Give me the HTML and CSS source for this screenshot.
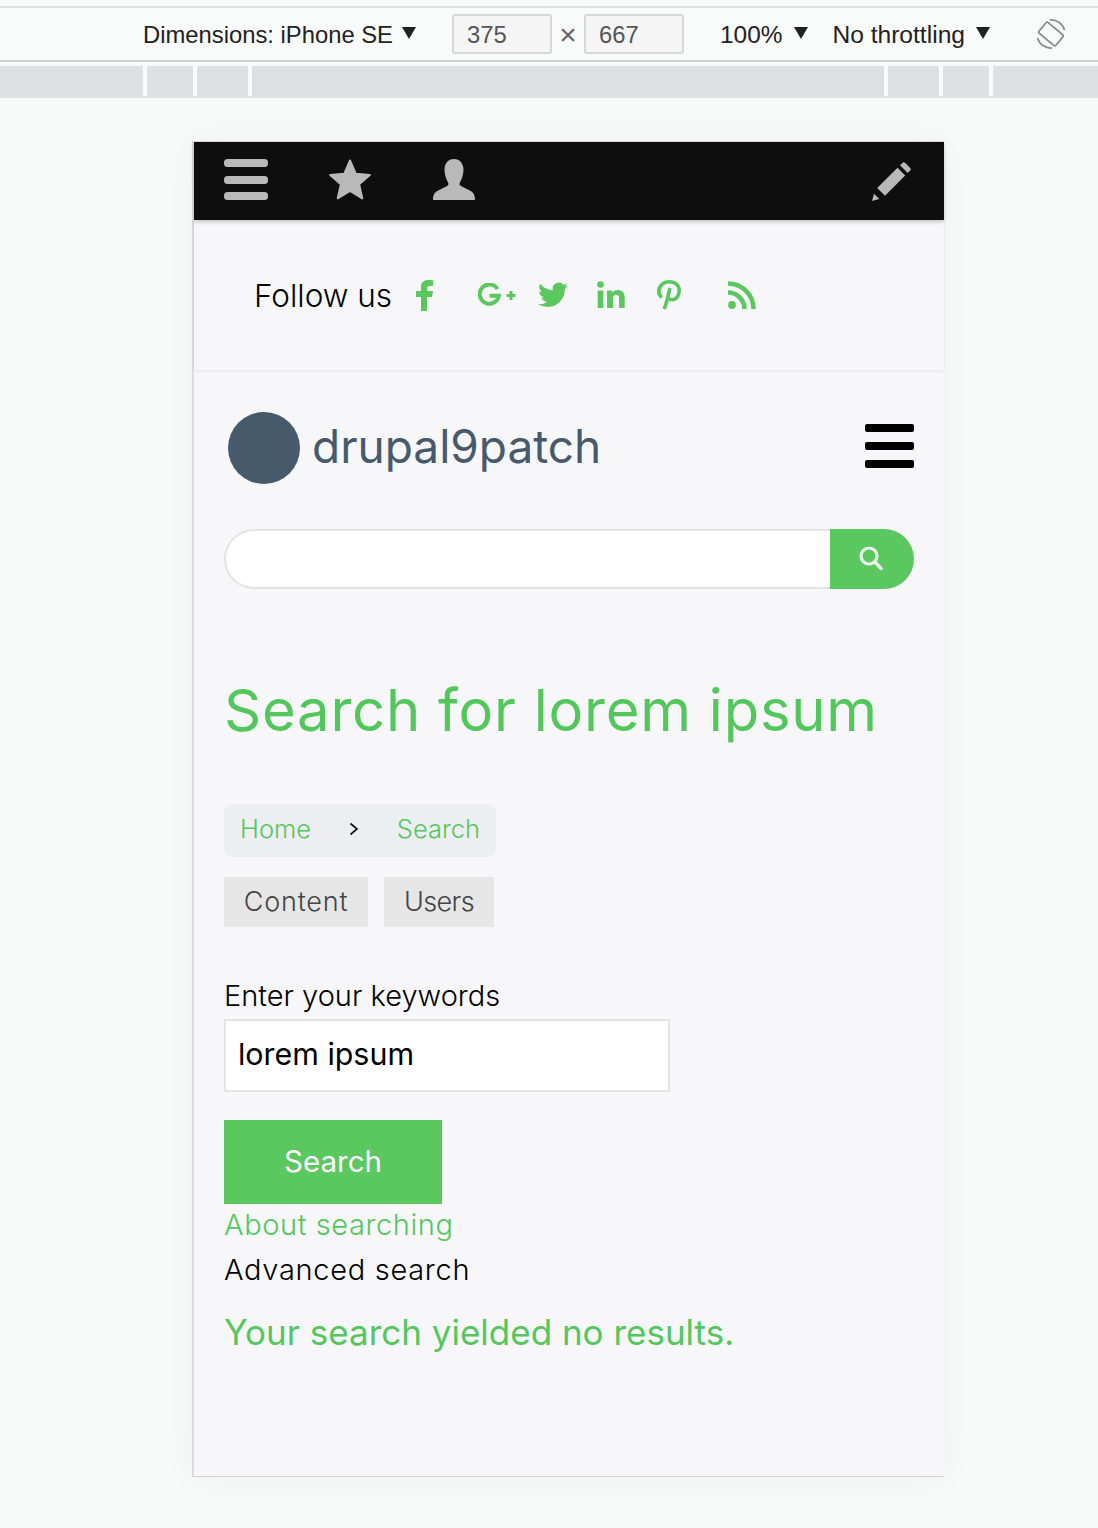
FILE: index.html
```html
<!DOCTYPE html>
<html lang="en">
<head>
    <meta charset="UTF-8">
    <meta name="viewport" content="width=device-width, initial-scale=1.0">
    <title>Search for lorem ipsum</title>
    <link rel="stylesheet" href="styles.css">
</head>
<body>
    <div class="devbar">
        <span class="dev-device">Dimensions: iPhone SE</span><span class="caret caret-device"></span>
        <span class="dev-box dev-box-w">375</span>
        <span class="dev-x">&times;</span>
        <span class="dev-box">667</span>
        <span class="dev-zoom">100%</span><span class="caret caret-zoom"></span>
        <span class="dev-throttle">No throttling</span><span class="caret caret-throttle"></span>
        <svg class="dev-rotate" width="30" height="30" viewBox="0 0 30 30" fill="none" stroke="#8a8a8a" stroke-width="1.7">
            <rect x="4" y="8" width="22" height="14" rx="1.500" transform="rotate(40 15 15)"/>
            <path d="M13.500 1A14 14 0 0 1 28.500 11M1.500 19A14 14 0 0 0 16 29"/>
        </svg>
    </div>
    <div class="ruler">
        <i class="tick tick-a"></i><i class="tick tick-b"></i><i class="tick tick-c"></i>
        <i class="tick tick-d"></i><i class="tick tick-e"></i><i class="tick tick-f"></i>
    </div>

    <div class="frame">
        <div class="topbar">
            <svg class="tb-menu" width="44" height="42" viewBox="0 0 44 42" fill="#b9b9b9">
                <rect y="0" width="44" height="8" rx="3.500"/>
                <rect y="17" width="44" height="8" rx="3.500"/>
                <rect y="33" width="44" height="8" rx="3.500"/>
            </svg>
            <svg class="tb-star" width="42" height="42" viewBox="0 0 42 42" fill="#b9b9b9" stroke="#b9b9b9" stroke-width="2" stroke-linejoin="round">
                <path d="M21 1.500l5.700 13.200 14.100 1.200-10.700 9.400 3.200 14-12.300-7.400-12.300 7.400 3.200-14L1.200 15.900l14.100-1.200z"/>
            </svg>
            <svg class="tb-user" width="42" height="42" viewBox="0 0 42 42" fill="#b9b9b9">
                <path d="M21 0c6 0 9.500 4.800 9.500 10.500 0 4.500-1.300 9-3.200 12.200-1.400 2-.9 3.600 1.100 4.600l9.300 4.700C40 33.300 42 35.500 42 41H0c0-5.500 2-7.700 4.300-9l9.300-4.700c2-1 2.500-2.600 1.100-4.600-1.900-3.200-3.200-7.700-3.200-12.200C11.500 4.800 15 0 21 0z"/>
            </svg>
            <svg class="tb-pencil" width="40" height="40" viewBox="0 0 40 40" fill="#b9b9b9">
                <path d="M25.500 6.800l7.700 7.700L13 34.700 5.200 27z"/>
                <path d="M28 4.300l2.300-2.300c1-1 2-1 3 0l4.700 4.700c1 1 1 2 0 3L35.700 12z"/>
                <path d="M0 40l2-7.300 5.300 5.300z"/>
            </svg>
        </div>

        <div class="follow">
            <span class="follow-label">Follow us</span>
            <svg class="so so-fb" width="18" height="31" viewBox="0 0 18 31" fill="#5bc75f">
                <path d="M5 31V17H0v-6h5V7c0-5 3-7 7-7 2 0 4 .2 5 .3V6h-3c-2.500 0-3 1.200-3 3v2h6l-1 6h-5v14z"/>
            </svg>
            <svg class="so so-gp" width="38" height="24" viewBox="0 0 38 24" fill="none" stroke="#5bc75f">
                <path d="M19.500 6A9.600 9.600 0 1 0 20.800 12.800H11.500" stroke-width="4"/>
                <path d="M33 8v9M28.500 12.500h9" stroke-width="3"/>
            </svg>
            <svg class="so so-tw" width="30" height="26" viewBox="0 0 24 20" fill="#5bc75f">
                <path d="M24 2.400c-.9.400-1.800.7-2.800.8 1-.6 1.800-1.600 2.200-2.700-1 .6-2 1-3.100 1.200A4.900 4.900 0 0 0 11.900 6.200 14 14 0 0 1 1.700.9a4.900 4.900 0 0 0 1.500 6.600c-.8 0-1.600-.2-2.200-.6v.1c0 2.400 1.700 4.400 3.900 4.800-.7.200-1.500.2-2.200.1.600 2 2.400 3.400 4.600 3.400A9.900 9.900 0 0 1 0 17.300 14 14 0 0 0 7.500 19.500c9.100 0 14-7.500 14-14v-.6c1-.7 1.800-1.500 2.500-2.500z"/>
            </svg>
            <svg class="so so-in" width="28" height="28" viewBox="0 0 28 28" fill="#5bc75f">
                <circle cx="3.500" cy="3.500" r="3.300"/>
                <path d="M.7 9.500h5.600V27H.7zM10 9.500h5.300v2.400c.9-1.600 2.800-2.900 5.500-2.900 5.600 0 6.900 3.600 6.900 8.400V27h-5.600v-8.600c0-2.100-.1-4.600-2.800-4.600s-3.200 2.200-3.200 4.500V27H10z"/>
            </svg>
            <svg class="so so-pi" width="24" height="30" viewBox="0 0 24 30" fill="none" stroke="#5bc75f" stroke-width="3.600">
                <path d="M4.800 17.500C2.800 16 1.800 13.800 1.800 11.300 1.800 6 6.300 1.800 12.500 1.800c5.800 0 9.700 3.700 9.700 8.700 0 5.500-3.200 9.300-7.200 9.300-2 0-3.300-.8-3.800-2.300"/>
                <path d="M13 8L9.800 21c-.6 2.500-1.500 5.500-2.700 8"/>
            </svg>
            <svg class="so so-rss" width="28" height="28" viewBox="0 0 28 28" fill="none" stroke="#5bc75f" stroke-width="4.600">
                <circle cx="4" cy="24" r="3.900" fill="#5bc75f" stroke="none"/>
                <path d="M0 11.500A16.500 16.500 0 0 1 16.500 28M0 2.500A25.500 25.500 0 0 1 25.500 28"/>
            </svg>
        </div>

        <div class="main">
            <div class="brand-row">
                <div class="brand">
                    <span class="logo"></span>
                    <span class="site-name">drupal9patch</span>
                </div>
                <div class="burger"><i></i><i></i><i></i></div>
            </div>

            <div class="top-search">
                <div class="top-input"></div>
                <div class="top-btn">
                    <svg width="28" height="28" viewBox="0 0 28 28" fill="none" stroke="#e9f7ea" stroke-width="3.200">
                        <circle cx="12" cy="11" r="8"/>
                        <path d="M18 17l6 6.500" stroke-linecap="round" stroke-width="3.500"/>
                    </svg>
                </div>
            </div>

            <h1>Search for lorem ipsum</h1>

            <div class="crumbs">
                <a class="crumb" href="#">Home</a>
                <svg class="crumb-sep" width="10" height="14" viewBox="0 0 10 14" fill="none" stroke="#111" stroke-width="1.700"><path d="M1.500 1.500L8 7l-6.500 5.500"/></svg>
                <a class="crumb" href="#">Search</a>
            </div>

            <div class="tabs">
                <a class="tab tab-content" href="#">Content</a>
                <a class="tab tab-users" href="#">Users</a>
            </div>

            <label class="kw-label" for="kw">Enter your keywords</label>
            <input class="kw-input" id="kw" type="text" value="lorem ipsum">

            <button class="search-btn">Search</button>

            <a class="about" href="#">About searching</a>
            <div class="advanced">Advanced search</div>
            <h3 class="no-results">Your search yielded no results.</h3>
        </div>
    </div>
</body>
</html>
```

FILE: styles.css
```css
* {
    box-sizing: border-box;
}
body {
    margin: 0;
    height: 1528px;
    overflow: hidden;
    background-color: #f8faf9;
    font-family: Inter, "Liberation Sans", sans-serif;
    color: #000;
}
a {
    color: #53c75c;
    text-decoration: none;
}

/* devtools bar */
.devbar {
    height: 56px;
    margin-top: 6px;
    padding-top: 2px;
    display: flex;
    align-items: center;
    background-color: #f9fafa;
    border-top: 2px solid #dedfe0;
    border-bottom: 2px solid #cfd0d2;
    font-family: "Liberation Sans", sans-serif;
    font-size: 23.8px;
    color: #222;
}
.dev-device {
    margin-left: 143px;
}
.caret {
    width: 0;
    height: 0;
    border-left: 7px solid transparent;
    border-right: 7px solid transparent;
    border-top: 12px solid #222;
    margin-top: -4px;
}
.caret-device {
    margin-left: 9px;
}
.dev-box {
    width: 100px;
    height: 40px;
    margin-top: -2px;
    padding-left: 13px;
    line-height: 38px;
    background-color: #f5f5f5;
    border: 2px solid #d8d8d8;
    border-radius: 3px;
    color: #555;
}
.dev-box-w {
    margin-left: 36px;
}
.dev-x {
    width: 32px;
    text-align: center;
    font-size: 30px;
    color: #666;
}
.dev-zoom {
    margin-left: 36px;
    font-size: 24.4px;
}
.caret-zoom {
    margin-left: 12px;
}
.dev-throttle {
    margin-left: 24px;
    font-size: 24.6px;
}
.caret-throttle {
    margin-left: 11px;
}
.dev-rotate {
    margin-left: 46px;
    margin-top: -2px;
}
.ruler {
    height: 32px;
    margin-top: 4px;
    display: flex;
    align-items: flex-start;
    background-color: #dfe0e4;
}
.tick {
    width: 4px;
    height: 30px;
    background-color: #f9fafa;
}
.tick-a { margin-left: 143px; }
.tick-b { margin-left: 46px; }
.tick-c { margin-left: 51px; }
.tick-d { margin-left: 632px; }
.tick-e { margin-left: 51px; }
.tick-f { margin-left: 46px; }

/* mobile frame */
.frame {
    width: 752px;
    height: 1336px;
    margin: 43px 0 0 192px;
    background-color: #f7f7fa;
    border-left: 2px solid #dcdcdc;
    border-top: 1px solid #dcdcdc;
    border-bottom: 1px solid #d0d0d0;
    box-shadow: 0 0 40px rgba(0,0,0,0.04);
}
.topbar {
    height: 78px;
    padding: 0 30px;
    display: flex;
    align-items: center;
    background-color: #0e0e0e;
    box-shadow: 0 2px 4px rgba(0,0,0,0.2);
    position: relative;
}
.tb-menu {
    margin-top: -2px;
}
.tb-star {
    margin-left: 61px;
    margin-top: -2px;
}
.tb-user {
    margin-left: 62px;
    margin-top: -2px;
}
.tb-pencil {
    margin-left: auto;
    margin-right: 2px;
}
.follow {
    height: 150px;
    padding-left: 60px;
    display: flex;
    align-items: center;
    box-shadow: 0 1px 3px rgba(0,0,0,0.08);
}
.follow-label {
    font-size: 31.5px;
    font-weight: 300;
    width: 162px;
}
.so {
    flex: none;
}
.so-gp { margin-left: 44px; }
.so-tw { margin-left: 22px; }
.so-in { margin-left: 29px; }
.so-pi { margin-left: 32px; }
.so-rss { margin-left: 47px; }

.main {
    padding: 42px 30px 0 30px;
}
.brand-row {
    display: flex;
    align-items: center;
    justify-content: space-between;
    height: 72px;
}
.brand {
    display: flex;
    align-items: center;
    margin-left: 4px;
}
.logo {
    width: 72px;
    height: 72px;
    border-radius: 50%;
    background-color: #475a6c;
}
.site-name {
    margin: -5px 0 0 12px;
    font-size: 46px;
    color: #475a6c;
}
.burger {
    width: 49px;
    margin-top: -4px;
}
.burger i {
    display: block;
    height: 8px;
    margin-bottom: 10px;
    border-radius: 2px;
    background-color: #000;
}
.burger i:last-child {
    margin-bottom: 0;
}
.top-search {
    margin-top: 45px;
    display: flex;
    height: 60px;
}
.top-input {
    flex: 1;
    background-color: #fff;
    border: 2px solid #e4e4e4;
    border-right: none;
    border-radius: 30px 0 0 30px;
}
.top-btn {
    width: 84px;
    padding-left: 27px;
    display: flex;
    align-items: center;
    background-color: #5bc75f;
    border-radius: 0 30px 30px 0;
}
h1 {
    margin: 87px 0 0 0;
    font-size: 58px;
    font-weight: 400;
    letter-spacing: 0.75px;
    line-height: 68px;
    color: #53c75c;
}
.crumbs {
    margin-top: 60px;
    width: 272px;
    height: 53px;
    padding: 0 16px 4px 16px;
    display: flex;
    align-items: center;
    justify-content: space-between;
    background-color: #eceef1;
    border-radius: 8px;
}
.crumb {
    font-size: 25.5px;
    font-weight: 300;
}
.tabs {
    margin-top: 20px;
    display: flex;
    gap: 16px;
}
.tab {
    height: 50px;
    line-height: 50px;
    text-align: center;
    background-color: #e6e6e6;
    font-size: 27px;
    font-weight: 300;
    color: #444;
}
.tab-content {
    width: 144px;
    letter-spacing: 0.8px;
}
.tab-users {
    width: 110px;
    letter-spacing: -0.6px;
}
.kw-label {
    display: block;
    margin-top: 50px;
    font-size: 29px;
    line-height: 38px;
    font-weight: 300;
}
.kw-input {
    display: block;
    margin-top: 4px;
    width: 446px;
    height: 73px;
    padding: 0 12px 4px 12px;
    background-color: #fff;
    border: 2px solid #e4e4e4;
    font-family: Inter, sans-serif;
    font-size: 30.4px;
    color: #000;
}
.search-btn {
    display: block;
    margin-top: 28px;
    width: 218px;
    height: 84px;
    padding-bottom: 4px;
    border: none;
    background-color: #5bc75f;
    color: #fff;
    font-family: Inter, sans-serif;
    font-size: 29.5px;
}
.about {
    display: block;
    margin-top: 1px;
    font-size: 29px;
    letter-spacing: 0.6px;
    line-height: 40px;
    font-weight: 300;
}
.advanced {
    margin-top: 5px;
    font-size: 29px;
    letter-spacing: 0.7px;
    line-height: 40px;
    font-weight: 300;
}
.no-results {
    margin: 19px 0 0 0;
    font-size: 35px;
    line-height: 46px;
    font-weight: 400;
    color: #53c75c;
}
```
